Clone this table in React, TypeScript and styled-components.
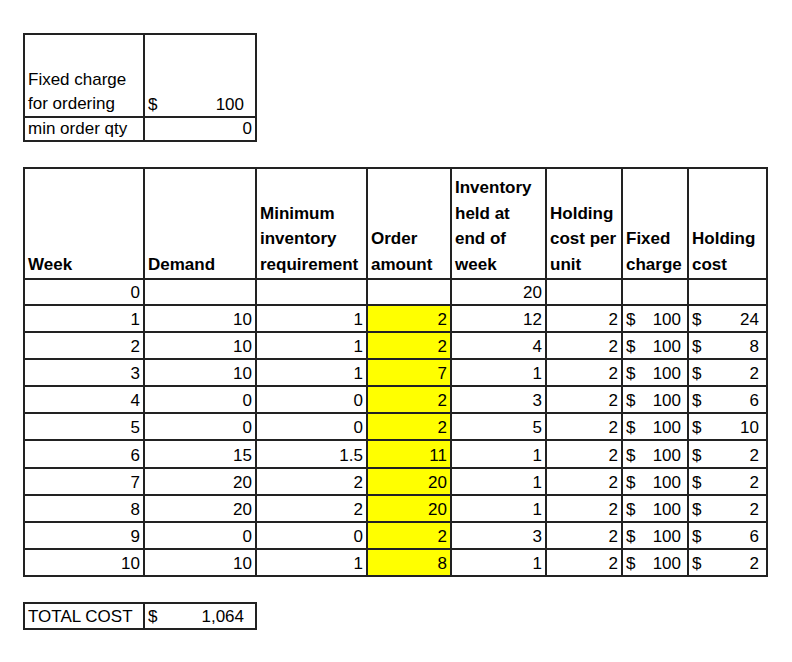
import React from 'react';
import styled, { createGlobalStyle } from 'styled-components';

const GlobalStyle = createGlobalStyle`
  html, body {
    margin: 0;
    background: #ffffff;
  }
  body {
    font-family: "Liberation Sans", Arial, sans-serif;
    color: #000;
  }
`;

const Page = styled.div`
  display: flex;
  flex-direction: column;
  align-items: flex-start;
  padding: 33px 0 0 23px;
  gap: 25px;
`;

const Sheet = styled.table<{ $gapTop?: number }>`
  border-collapse: collapse;
  table-layout: fixed;
  font-size: 17px;
  margin-top: ${(p) => p.$gapTop ?? 0}px;
`;

const Cell = styled.td<{ $align?: 'left' | 'right'; $fill?: string }>`
  border: 2px solid #222;
  padding: 0 3px;
  text-align: ${(p) => p.$align ?? 'right'};
  vertical-align: bottom;
  background: ${(p) => p.$fill ?? '#fff'};
  white-space: nowrap;
  line-height: 22px;
`;

const Head = styled.th`
  border: 2px solid #222;
  padding: 0 3px 1px;
  text-align: left;
  vertical-align: bottom;
  font-weight: bold;
  line-height: 25.5px;
  height: 108px;
`;

const Row = styled.tr<{ $h: number }>`
  height: ${(p) => p.$h}px;
`;

const LabelText = styled.div`
  line-height: 24px;
`;

const Money = styled.div<{ $pad?: number }>`
  display: flex;
  justify-content: space-between;
  padding-right: ${(p) => p.$pad ?? 0}px;
`;

const mainCols = [120, 112, 111, 84, 95, 76, 66, 79];

const headers = [
  ['Week'],
  ['Demand'],
  ['Minimum', 'inventory', 'requirement'],
  ['Order', 'amount'],
  ['Inventory', 'held at', 'end of', 'week'],
  ['Holding', 'cost per', 'unit'],
  ['Fixed', 'charge'],
  ['Holding', 'cost'],
];

type WeekRow = [number, number, number, number, number, number, number, number];

// week, demand, min req, order, inventory, holding/unit, fixed, holding cost
const weeks: WeekRow[] = [
  [1, 10, 1, 2, 12, 2, 100, 24],
  [2, 10, 1, 2, 4, 2, 100, 8],
  [3, 10, 1, 7, 1, 2, 100, 2],
  [4, 0, 0, 2, 3, 2, 100, 6],
  [5, 0, 0, 2, 5, 2, 100, 10],
  [6, 15, 1.5, 11, 1, 2, 100, 2],
  [7, 20, 2, 20, 1, 2, 100, 2],
  [8, 20, 2, 20, 1, 2, 100, 2],
  [9, 0, 0, 2, 3, 2, 100, 6],
  [10, 10, 1, 8, 1, 2, 100, 2],
];

function Cols({ widths }: { widths: number[] }) {
  return (
    <colgroup>
      {widths.map((w, i) => (
        <col key={i} style={{ width: w }} />
      ))}
    </colgroup>
  );
}

export default function App() {
  return (
    <>
      <GlobalStyle />
      <Page>
        <Sheet>
          <Cols widths={[120, 112]} />
          <tbody>
            <Row $h={83}>
              <Cell $align="left">
                <LabelText>Fixed charge</LabelText>
                <LabelText>for ordering</LabelText>
              </Cell>
              <Cell>
                <Money $pad={8}>
                  <span>$</span>
                  <span>100</span>
                </Money>
              </Cell>
            </Row>
            <Row $h={23}>
              <Cell $align="left">min order qty</Cell>
              <Cell>0</Cell>
            </Row>
          </tbody>
        </Sheet>

        <Sheet>
          <Cols widths={mainCols} />
          <thead>
            <tr>
              {headers.map((lines) => (
                <Head key={lines.join(' ')}>
                  {lines.map((l) => (
                    <div key={l}>{l}</div>
                  ))}
                </Head>
              ))}
            </tr>
          </thead>
          <tbody>
            <Row $h={26}>
              <Cell>0</Cell>
              <Cell />
              <Cell />
              <Cell />
              <Cell>20</Cell>
              <Cell />
              <Cell />
              <Cell />
            </Row>
            {weeks.map(([wk, dem, min, ord, inv, hc, fixed, hold]) => (
              <Row $h={27.1} key={wk}>
                <Cell>{wk}</Cell>
                <Cell>{dem}</Cell>
                <Cell>{min}</Cell>
                <Cell $fill="#ffff00">{ord}</Cell>
                <Cell>{inv}</Cell>
                <Cell>{hc}</Cell>
                <Cell>
                  <Money $pad={3}>
                    <span>$</span>
                    <span>{fixed}</span>
                  </Money>
                </Cell>
                <Cell>
                  <Money $pad={4}>
                    <span>$</span>
                    <span>{hold}</span>
                  </Money>
                </Cell>
              </Row>
            ))}
          </tbody>
        </Sheet>

        <Sheet>
          <Cols widths={[120, 112]} />
          <tbody>
            <Row $h={26}>
              <Cell $align="left">TOTAL COST</Cell>
              <Cell>
                <Money $pad={8}>
                  <span>$</span>
                  <span>1,064</span>
                </Money>
              </Cell>
            </Row>
          </tbody>
        </Sheet>
      </Page>
    </>
  );
}
